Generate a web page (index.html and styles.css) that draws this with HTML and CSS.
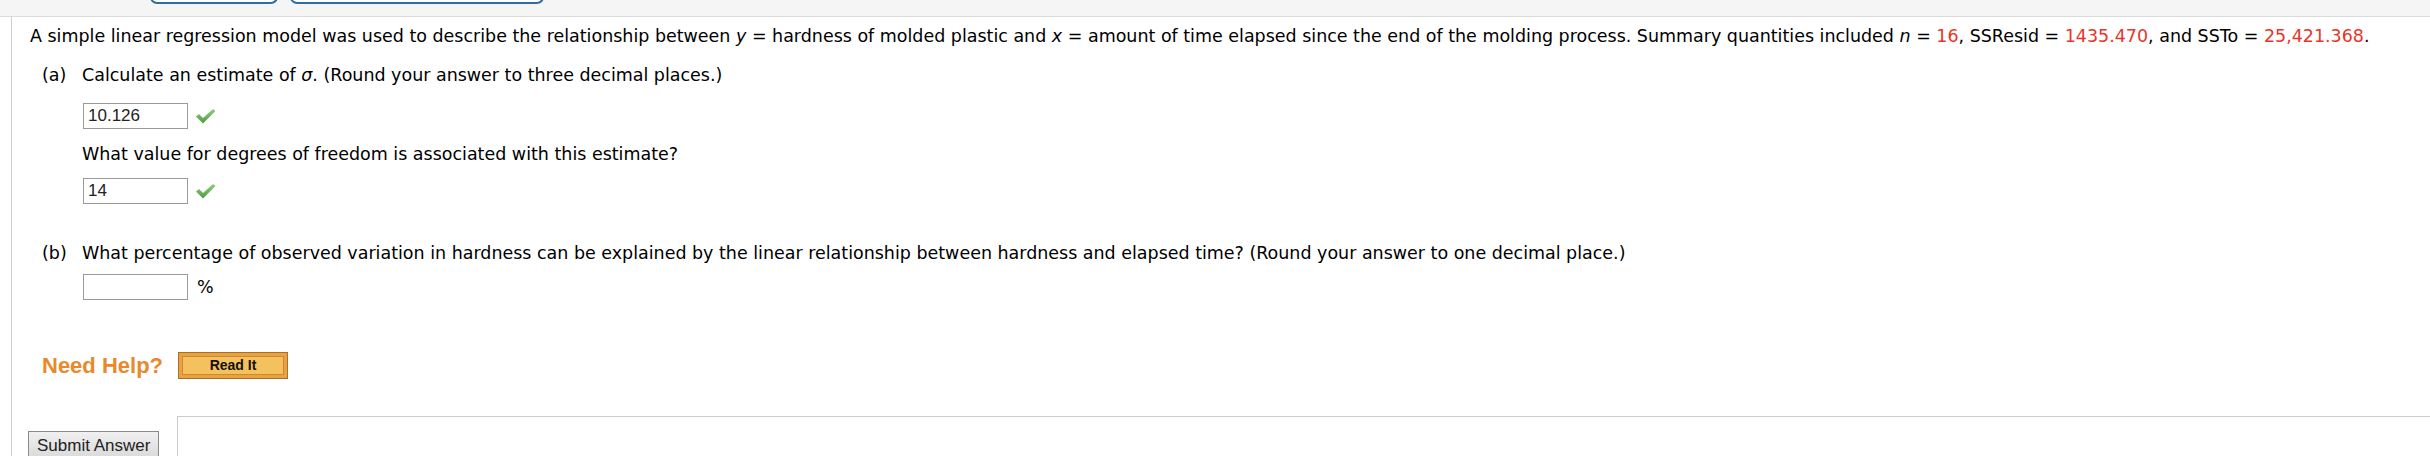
FILE: index.html
```html
<!DOCTYPE html>
<html>
<head>
<meta charset="utf-8">
<link rel="stylesheet" href="styles.css">
</head>
<body>
<div class="topbar">
  <div class="tab tab-1"></div>
  <div class="tab tab-2"></div>
</div>
<div class="main">
  <p class="intro">A simple linear regression model was used to describe the relationship between <i>y</i> = hardness of molded plastic and <i>x</i> = amount of time elapsed since the end of the molding process. Summary quantities included <i>n</i> = <span class="red">16</span>, SSResid = <span class="red">1435.470</span>, and SSTo = <span class="red">25,421.368</span>.</p>

  <div class="part part-a">
    <div class="label">(a)</div>
    <div class="body">
      <p class="q">Calculate an estimate of <i>σ</i>. (Round your answer to three decimal places.)</p>
      <div class="answer">
        <input class="box" type="text" value="10.126">
        <svg class="check" width="21" height="16" viewBox="0 0 21 16"><defs><linearGradient id="g1" x1="0" y1="0" x2="0" y2="1"><stop offset="0" stop-color="#8fd07e"/><stop offset="1" stop-color="#4f9b44"/></linearGradient></defs><path d="M1 8.5 L4 6 L8 10 L18 1 L20.5 3 L8 15.5 Z" fill="url(#g1)"/></svg>
      </div>
      <p class="q q2">What value for degrees of freedom is associated with this estimate?</p>
      <div class="answer">
        <input class="box" type="text" value="14">
        <svg class="check" width="21" height="16" viewBox="0 0 21 16"><defs><linearGradient id="g2" x1="0" y1="0" x2="0" y2="1"><stop offset="0" stop-color="#8fd07e"/><stop offset="1" stop-color="#4f9b44"/></linearGradient></defs><path d="M1 8.5 L4 6 L8 10 L18 1 L20.5 3 L8 15.5 Z" fill="url(#g2)"/></svg>
      </div>
    </div>
  </div>

  <div class="part part-b">
    <div class="label">(b)</div>
    <div class="body">
      <p class="q">What percentage of observed variation in hardness can be explained by the linear relationship between hardness and elapsed time? (Round your answer to one decimal place.)</p>
      <div class="answer answer-b">
        <input class="box" type="text" value="">
        <span class="unit">%</span>
      </div>
    </div>
  </div>

  <div class="help">
    <span class="need">Need Help?</span>
    <button class="readit"><span class="readit-inner">Read It</span></button>
  </div>

  <div class="footer">
    <button class="submit">Submit Answer</button>
    <div class="panel"></div>
  </div>
</div>
</body>
</html>
```
FILE: styles.css
```css
html, body {
  margin: 0;
  padding: 0;
  background: #fff;
  overflow: hidden;
}
body {
  width: 2430px;
  height: 456px;
  font-family: "DejaVu Sans", Verdana, sans-serif;
  color: #000;
}
.topbar {
  height: 16px;
  background: #f5f5f5;
  border-bottom: 1px solid #dcdcdc;
  display: flex;
  padding-left: 150px;
  gap: 12px;
  overflow: hidden;
}
.tab {
  height: 14px;
  margin-top: -10px;
  border: 2px solid #2f6ea5;
  border-top: none;
  border-radius: 0 0 7px 7px;
  background: #fff;
  box-sizing: border-box;
}
.tab-1 { width: 128px; }
.tab-2 { width: 254px; }
.main {
  margin-left: 11px;
  border-left: 1px solid #cfcfcf;
  padding-left: 18px;
  height: 439px;
  display: flex;
  flex-direction: column;
}
p { margin: 0; }
.intro {
  font-size: 17.48px;
  line-height: 21px;
  margin-top: 9px;
  white-space: nowrap;
}
.red { color: #e8352a; }
.part {
  display: flex;
  font-size: 17.48px;
  line-height: 21px;
  margin-left: 12px;
}
.label { width: 40px; }
.part-a { margin-top: 18px; }
.part-b { margin-top: 39px; }
.q { white-space: nowrap; }
.answer {
  display: flex;
  align-items: center;
  margin-top: 17px;
  height: 26px;
}
.answer-b { margin-top: 10px; }
.q2 { margin-top: 15px; }
.q2 + .answer { margin-top: 13px; }
.box {
  width: 105px;
  height: 26px;
  box-sizing: border-box;
  border: 1px solid #9a9a9a;
  padding: 0 4px;
  margin: 0 0 0 1px;
  font-family: "Liberation Sans", Arial, sans-serif;
  font-size: 17px;
  color: #222;
  background: #fff;
  outline: none;
}
.check { margin-left: 7px; }
.unit {
  font-size: 17.48px;
  margin-left: 9px;
}
.help {
  display: flex;
  align-items: center;
  margin-top: 52px;
  margin-left: 12px;
  gap: 15px;
}
.need {
  font-family: "Liberation Sans", Arial, sans-serif;
  font-weight: bold;
  font-size: 22px;
  color: #e8892b;
}
.readit {
  width: 110px;
  height: 27px;
  box-sizing: border-box;
  padding: 3px;
  border: 1px solid #a8702e;
  background: #e9a23c;
  display: flex;
  cursor: pointer;
}
.readit-inner {
  flex: 1;
  border: 1px solid #c98a32;
  background: #f4c15e;
  font-family: "Liberation Sans", Arial, sans-serif;
  font-weight: bold;
  font-size: 14px;
  line-height: 17px;
  color: #111;
  text-align: center;
}
.footer {
  display: flex;
  margin-top: 37px;
  margin-left: -2px;
  flex: 1;
}
.submit {
  margin-top: 15px;
  height: 30px;
  padding: 0 8px;
  border: 1px solid #8a8a8a;
  background: linear-gradient(#f0f0f0, #d8d8d8);
  font-family: "Liberation Sans", Arial, sans-serif;
  font-size: 17px;
  color: #222;
  align-self: flex-start;
}
.panel {
  flex: 1;
  margin-left: 18px;
  border-left: 1px solid #cccccc;
  border-top: 1px solid #cccccc;
}
```
